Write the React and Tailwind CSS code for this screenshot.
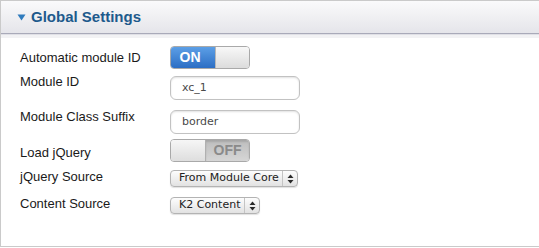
import React from "react";

function Label({ children, mt }) {
  return (
    <div className={`w-[150px] shrink-0 text-[13px] leading-[16px] text-[#1a1a1a] ${mt}`}>
      {children}
    </div>
  );
}

function Arrows() {
  return (
    <svg width="7" height="10" viewBox="0 0 7 10">
      <path d="M3.5 0.5 L6.5 4 L0.5 4 Z" fill="#2a2a2a" />
      <path d="M3.5 9.5 L6.5 6 L0.5 6 Z" fill="#2a2a2a" />
    </svg>
  );
}

function Select({ text, width }) {
  return (
    <div
      className={`flex h-[17px] ${width} rounded-[4px] border border-[#b3b3b3] bg-linear-to-b from-[#fdfdfd] to-[#e2e2e2] shadow-[0_1px_1px_rgba(0,0,0,0.12)]`}
    >
      <div className="flex-1 pl-[8px] flex items-center text-[11px] text-[#222] font-['DejaVu_Sans',sans-serif] whitespace-nowrap">
        {text}
      </div>
      <div className="w-[15px] border-l border-[#c4c4c4] flex items-center justify-center">
        <Arrows />
      </div>
    </div>
  );
}

function Input({ value }) {
  return (
    <div className="w-[130px] h-[24px] rounded-[6px] border border-[#c2c2c2] bg-white shadow-[inset_0_1px_2px_rgba(0,0,0,0.12)] flex items-center pl-[11px] text-[11px] text-[#4a4a4a] font-['DejaVu_Sans',sans-serif]">
      {value}
    </div>
  );
}

export default function App() {
  return (
    <div className="w-[539px] h-[248px] bg-white font-['Liberation_Sans',Arial,sans-serif]">
      <div className="h-[247px] border-t border-l border-b border-[#cacaca] flex flex-col">
        <div className="h-[33px] shrink-0 border-b border-[#a9aab9] bg-linear-to-b from-[#fafafb] to-[#e5e5ea] flex items-center pl-[16px]">
          <svg width="9" height="7" viewBox="0 0 9 7" className="mr-[5px] mt-[1px]">
            <path d="M0.5 0.5 L8.5 0.5 L4.5 6.5 Z" fill="#2f7bbd" />
          </svg>
          <span className="text-[15px] font-bold text-[#1d5a8c]">Global Settings</span>
        </div>
        <div className="h-[4px] shrink-0 bg-[#f2f2f4] border-t border-[#e0e0e6]"></div>
        <div className="flex flex-col pl-[19px] pt-[8px]">
          <div className="flex items-start">
            <Label mt="mt-[4px]">Automatic module ID</Label>
            <div className="flex w-[80px] h-[23px] rounded-[4px] border border-[#a9a9a9] overflow-hidden">
              <div className="w-[44px] bg-linear-to-b from-[#5c9fe6] to-[#2c6ec4] text-white font-bold text-[14px] flex items-center justify-center pr-[6px]">
                ON
              </div>
              <div className="flex-1 bg-linear-to-b from-[#f8f8f8] to-[#dcdcdc] border-l border-[#b8b8b8]"></div>
            </div>
          </div>
          <div className="flex items-start mt-[7px]">
            <Label mt="mt-[-2px]">Module ID</Label>
            <Input value="xc_1" />
          </div>
          <div className="flex items-start mt-[10px]">
            <Label mt="mt-[-1px]">Module Class Suffix</Label>
            <Input value="border" />
          </div>
          <div className="flex items-start mt-[5px]">
            <Label mt="mt-[6px]">Load jQuery</Label>
            <div className="flex w-[80px] h-[23px] rounded-[4px] border border-[#a9a9a9] overflow-hidden">
              <div className="w-[35px] bg-linear-to-b from-[#f6f6f6] to-[#dedede] border-r border-[#b0b0b0]"></div>
              <div className="flex-1 bg-linear-to-b from-[#bdbdbd] to-[#d6d6d6] text-[#8a8a8a] font-bold text-[14px] flex items-center justify-center shadow-[inset_0_2px_2px_rgba(0,0,0,0.12)]">
                OFF
              </div>
            </div>
          </div>
          <div className="flex items-start mt-[8px]">
            <Label mt="mt-[-1px]">jQuery Source</Label>
            <Select text="From Module Core" width="w-[128px]" />
          </div>
          <div className="flex items-start mt-[10px]">
            <Label mt="mt-[-1px]">Content Source</Label>
            <Select text="K2 Content" width="w-[90px]" />
          </div>
        </div>
      </div>
    </div>
  );
}
